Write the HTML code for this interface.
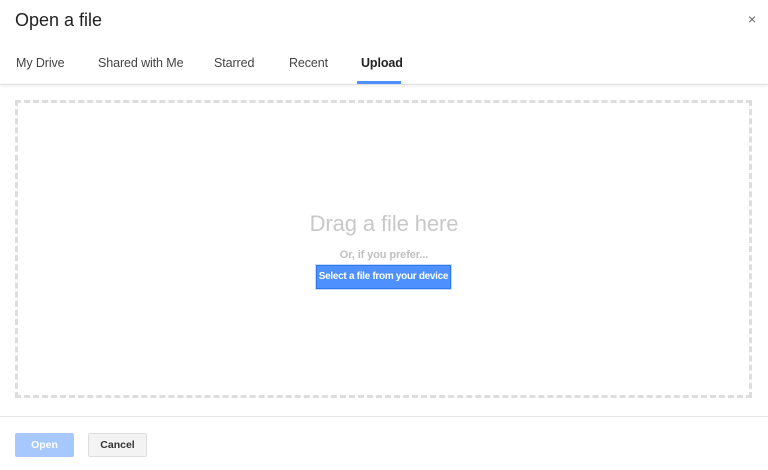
<!DOCTYPE html>
<html><head><style>
body{margin:0;width:768px;height:470px;background:#fff;font-family:"Liberation Sans",Arial,sans-serif;position:relative;overflow:hidden}
.t{position:absolute;left:15px;top:10px;font-size:18px;color:#222}
.x{position:absolute;left:748px;top:11px;font-size:14px;color:#666}
.tab{position:absolute;top:56px;font-size:12.5px;color:#444;letter-spacing:-0.1px}
.hd{position:absolute;left:0;top:84px;width:768px;height:1px;background:#e0e0e0;box-shadow:0 1px 3px rgba(0,0,0,.15)}
.ul{position:absolute;left:357px;top:81px;width:44px;height:3px;background:#4d90fe}
.drop{position:absolute;left:15px;top:100px;width:731px;height:292px;border:3px dashed #ddd}
.drag{position:absolute;left:0;width:768px;text-align:center;top:211px;font-size:22px;color:#c8c8c8;letter-spacing:-0.1px}
.or{position:absolute;left:0;width:768px;text-align:center;top:249px;font-size:11px;font-weight:bold;color:#c0c0c0;letter-spacing:-0.1px}
.sel{position:absolute;left:316px;top:265px;width:135px;height:24px;background:#4d90fe;border:1px solid #3079ed;box-shadow:0 0 0 1px #c6dafc;color:#fff;font-size:10px;font-weight:bold;text-align:center;line-height:22px;box-sizing:border-box;white-space:nowrap;letter-spacing:-0.3px}
.ft{position:absolute;left:0;top:416px;width:768px;height:1px;background:#e5e5e5}
.b{position:absolute;top:433px;width:59px;height:24px;font-size:10.5px;font-weight:bold;text-align:center;line-height:24px;box-sizing:border-box;border-radius:2px}
</style></head><body>
<div class="t">Open a file</div>
<div class="x">×</div>
<div class="tab" style="left:16px">My Drive</div>
<div class="tab" style="left:98px">Shared with Me</div>
<div class="tab" style="left:214px">Starred</div>
<div class="tab" style="left:289px">Recent</div>
<div class="tab" style="left:361px;font-weight:bold;color:#222">Upload</div>
<div class="hd"></div><div class="ul"></div>
<div class="drop"></div>
<div class="drag">Drag a file here</div>
<div class="or">Or, if you prefer...</div>
<div class="sel">Select a file from your device</div>
<div class="ft"></div>
<div class="b" style="left:15px;background:#a7c8fd;color:#fff">Open</div>
<div class="b" style="left:88px;background:#f3f3f3;border:1px solid #ddd;color:#333;line-height:22px">Cancel</div>
</body></html>
